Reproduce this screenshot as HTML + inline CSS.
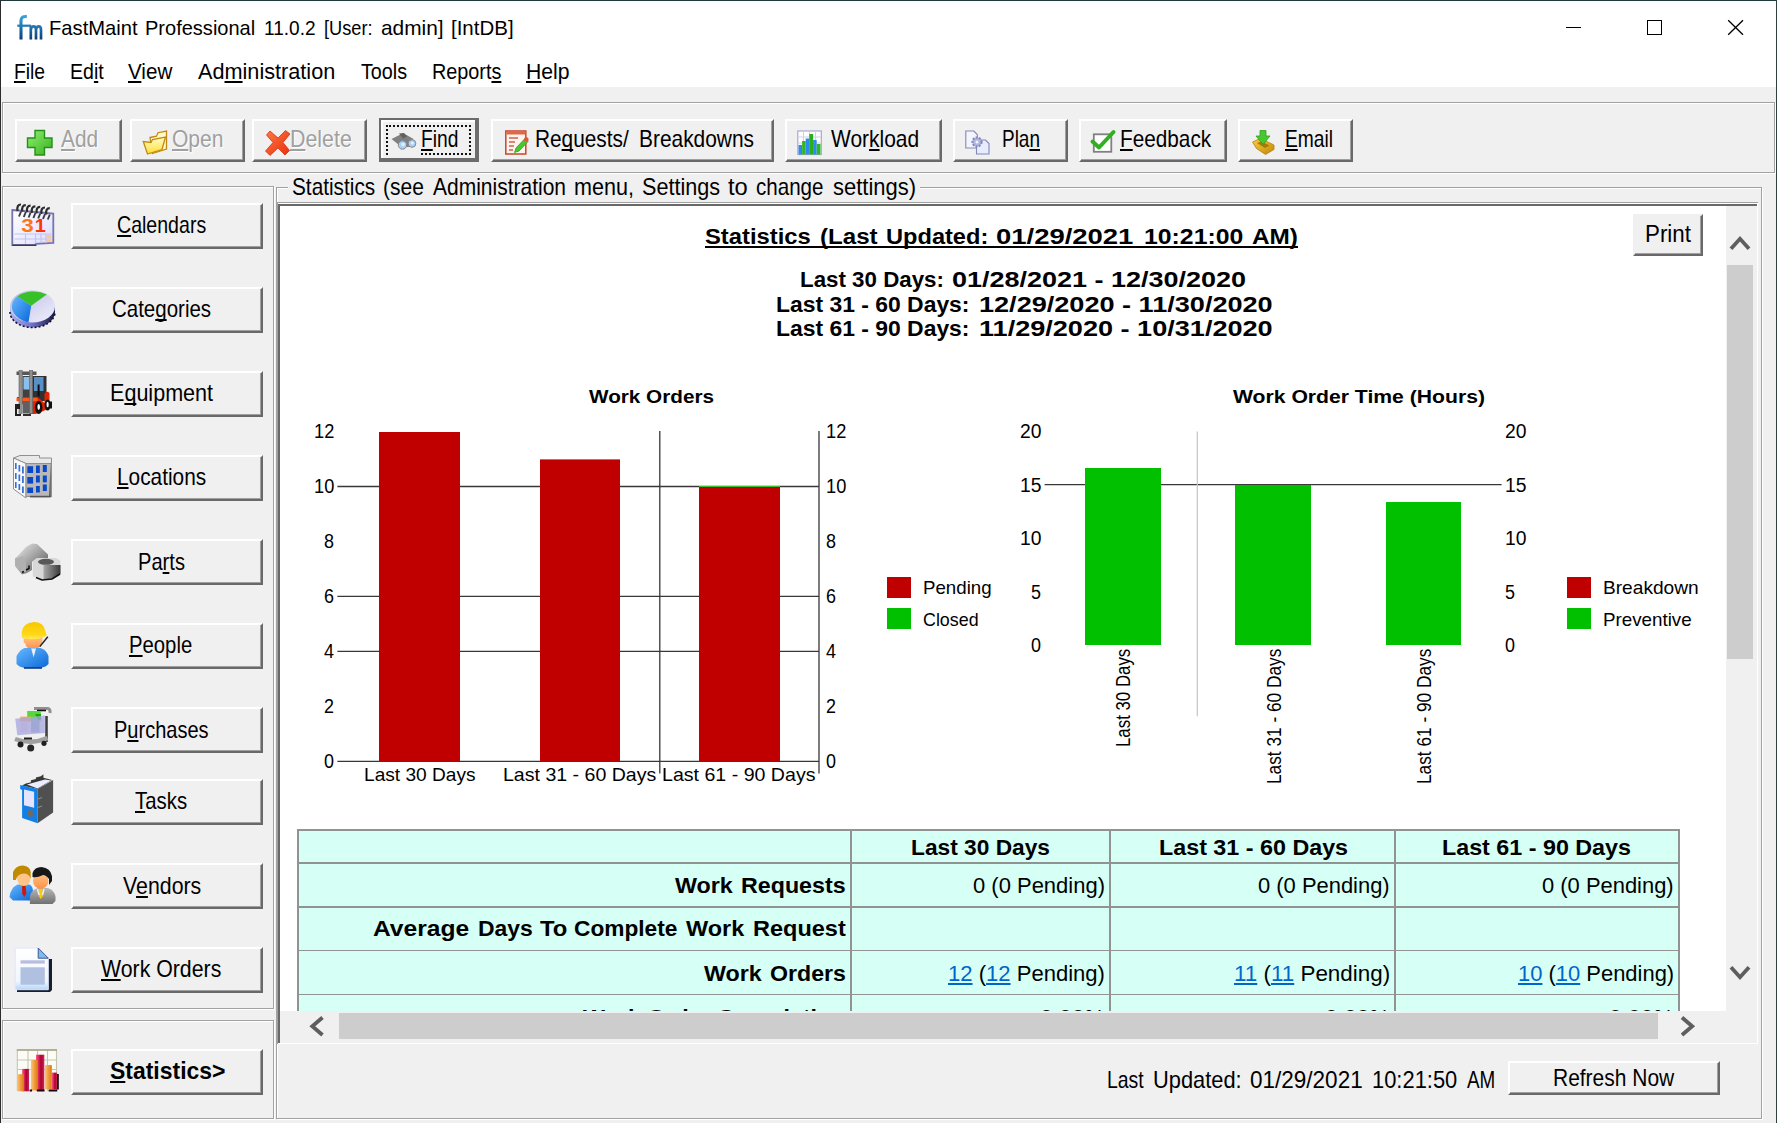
<!DOCTYPE html>
<html><head><meta charset="utf-8"><title>FastMaint</title>
<style>
*{box-sizing:border-box;margin:0;padding:0}
html,body{width:1777px;height:1123px;overflow:hidden;background:#f0f0f0;font-family:"Liberation Sans",sans-serif;color:#000}
.a{position:absolute}
.t{position:absolute;white-space:nowrap;line-height:1}
u{text-decoration:underline;text-decoration-skip-ink:none;text-underline-offset:2px;text-decoration-thickness:1.5px}
.btn{position:absolute;background:#f0f0f0;border-top:2px solid #fff;border-left:2px solid #fff;border-right:2px solid #696969;border-bottom:2px solid #696969;box-shadow:inset -1px -1px 0 #a0a0a0}
.dis{color:#a0a0a0;text-shadow:1px 1px 0 #fff}
.panel{position:absolute;border:1.3px solid #a2a2a2;box-shadow:inset 1px 1px 0 #fff, 1px 1px 0 #fff}
.b{font-weight:bold}
.gl{background:#3a3a3a}
.rd{background:#c00000}
.gr{background:#00c000}
.tl{background:#8f9493}
.lk{color:#0066cc;text-decoration:underline;text-decoration-skip-ink:none;text-underline-offset:2px}
.rot{transform-origin:0 0}

</style></head><body>
<!-- window frame -->
<div class="a" style="left:0;top:0;width:1777px;height:87px;background:#fff"></div>
<div class="a" style="left:0;top:0;width:1777px;height:1px;background:#1f3a3a"></div>
<div class="a" style="left:0;top:0;width:1px;height:1123px;background:#2b2b2b"></div>
<div class="a" style="left:1775.500px;top:0;width:1.500px;height:1123px;background:#30403f"></div>
<div class="a" style="left:1566px;top:27px;width:15px;height:1.300px;background:#000"></div>
<div class="a" style="left:1647px;top:20px;width:15px;height:15px;border:1.3px solid #000"></div>
<svg class="a" style="left:1727px;top:19px" width="18" height="18"><path d="M1.200 1.200L16 15.800M16 1.200L1.200 15.800" stroke="#000" stroke-width="1.300" fill="none"/></svg>
<!-- toolbar -->
<div class="panel" style="left:2px;top:102px;width:1773px;height:71px"></div>
<div class="btn" style="left:15px;top:118.500px;width:107px;height:43px"></div>
<div class="btn" style="left:130px;top:118.500px;width:115px;height:43px"></div>
<div class="btn" style="left:252px;top:118.500px;width:115px;height:43px"></div>
<div class="a" style="left:379px;top:118px;width:100px;height:44px;background:#f0f0f0;border:2.5px solid #6c6c6c;border-right-width:4px;border-bottom-width:4px;box-shadow:inset 2px 2px 0 #fff"><div class="a" style="left:5px;top:4.500px;width:85px;height:30px;border:2px dotted #111"></div><div class="a" style="left:8px;top:31px;width:30px;height:4px;background:#f0f0f0"></div></div>
<div class="btn" style="left:491px;top:118.500px;width:283px;height:43px"></div>
<div class="btn" style="left:785px;top:118.500px;width:157px;height:43px"></div>
<div class="btn" style="left:953px;top:118.500px;width:115px;height:43px"></div>
<div class="btn" style="left:1079px;top:118.500px;width:148px;height:43px"></div>
<div class="btn" style="left:1238px;top:118.500px;width:115px;height:43px"></div>
<!-- left panels -->
<div class="panel" style="left:2px;top:186px;width:272px;height:823px"></div>
<div class="panel" style="left:2px;top:1020px;width:272px;height:99px"></div>
<div class="btn" style="left:71.400px;top:203px;width:192px;height:45.600px"></div>
<div class="btn" style="left:71.400px;top:287px;width:192px;height:45.600px"></div>
<div class="btn" style="left:71.400px;top:371px;width:192px;height:45.600px"></div>
<div class="btn" style="left:71.400px;top:455px;width:192px;height:45.600px"></div>
<div class="btn" style="left:71.400px;top:539px;width:192px;height:45.600px"></div>
<div class="btn" style="left:71.400px;top:623px;width:192px;height:45.600px"></div>
<div class="btn" style="left:71.400px;top:707px;width:192px;height:45.600px"></div>
<div class="btn" style="left:71.400px;top:779px;width:192px;height:45.600px"></div>
<div class="btn" style="left:71.400px;top:863px;width:192px;height:45.600px"></div>
<div class="btn" style="left:71.400px;top:947px;width:192px;height:45.600px"></div>
<div class="btn" style="left:71.400px;top:1049px;width:192px;height:45.600px"></div>
<!-- group box -->
<div class="panel" style="left:276px;top:187px;width:1486px;height:932px"></div>
<div class="a" style="left:288px;top:180px;width:632px;height:16px;background:#f0f0f0"></div>
<!-- browser -->
<div class="a" style="left:277px;top:202px;width:1481px;height:842px;background:#fff;border-top:1.5px solid #a0a0a0;border-left:1px solid #a0a0a0"></div>
<div class="a" style="left:278px;top:203.5px;width:1478.5px;height:839px;background:#f0f0f0;border-top:2.5px solid #696969;border-left:2px solid #696969"></div>
<div class="a" style="left:280px;top:206px;width:1476px;height:836px;background:#fff"></div>
<div class="btn" style="left:1633px;top:214px;width:70px;height:42px;border-top-color:#f0f0f0;border-left-color:#f0f0f0"></div>
<svg class="a" style="left:0;top:0" width="1777" height="1123" viewBox="0 0 1777 1123"><g stroke="#383838" stroke-width="1.300" fill="none">
<path d="M337.400 486.500H819M337.400 596.400H819M337.400 651.300H819M337.400 761.400H819M659.800 431V773.500M819 431V773.500"/>
<path d="M1044.600 484.700H1501.600"/>
<path d="M1197.300 431.500V716.300" stroke="#c4c4c4" stroke-width="1.200"/>
</g></svg>
<div class="a rd" style="left:379px;top:431.5px;width:81px;height:329.5px"></div>
<div class="a rd" style="left:540px;top:458.5px;width:80px;height:302.5px;border-top:1.5px solid #40c020"></div>
<div class="a rd" style="left:699px;top:486px;width:81px;height:275px;border-top:1.5px solid #40c020"></div>
<div class="a rd" style="left:887.3px;top:576.7px;width:24px;height:21.1px"></div>
<div class="a gr" style="left:887.3px;top:608.2px;width:24px;height:21px"></div>
<div class="a gr" style="left:1084.5px;top:468px;width:76.5px;height:177px"></div>
<div class="a gr" style="left:1235px;top:485px;width:76px;height:160px"></div>
<div class="a gr" style="left:1385.5px;top:501.5px;width:75.5px;height:143.5px"></div>
<div class="a rd" style="left:1567.2px;top:576.7px;width:23.5px;height:21.1px"></div>
<div class="a gr" style="left:1567.2px;top:608.2px;width:23.5px;height:21px"></div>
<div class="a" style="left:297.9px;top:829.8px;width:1381.3000000000002px;height:182.20000000000005px;background:#d6fff5"></div>
<div class="a tl" style="left:296.95px;top:828.9px;width:1.9px;height:183.1px"></div>
<div class="a tl" style="left:849.75px;top:828.9px;width:1.9px;height:183.1px"></div>
<div class="a tl" style="left:1109.25px;top:828.9px;width:1.9px;height:183.1px"></div>
<div class="a tl" style="left:1394.05px;top:828.9px;width:1.9px;height:183.1px"></div>
<div class="a tl" style="left:1678.25px;top:828.9px;width:1.9px;height:183.1px"></div>
<div class="a tl" style="left:296.95px;top:828.90px;width:1383.2px;height:1.8px"></div>
<div class="a tl" style="left:296.95px;top:862.20px;width:1383.2px;height:1.8px"></div>
<div class="a tl" style="left:296.95px;top:905.90px;width:1383.2px;height:1.8px"></div>
<div class="a tl" style="left:296.95px;top:949.70px;width:1383.2px;height:1.8px"></div>
<div class="a tl" style="left:296.95px;top:993.60px;width:1383.2px;height:1.8px"></div>
<div class="btn" style="left:1508px;top:1061px;width:212px;height:34px"></div>
<div id="h1ul" class="a" style="left:704.5px;top:245.5px;width:593.5px;height:2px;background:#000"></div>
<svg class="a" style="left:0;top:0" width="1777" height="1123" viewBox="0 0 1777 1123">
<defs>
<linearGradient id="gFm" gradientUnits="userSpaceOnUse" x1="0" y1="15" x2="0" y2="40"><stop offset="0" stop-color="#3aa8e0"/><stop offset="1" stop-color="#0a3c78"/></linearGradient>
<linearGradient id="gPlus" x1="0" y1="0" x2="1" y2="1"><stop offset="0" stop-color="#90f070"/><stop offset="1" stop-color="#38b020"/></linearGradient>
<linearGradient id="gFold" x1="0" y1="0" x2="0" y2="1"><stop offset="0" stop-color="#fffbd0"/><stop offset="1" stop-color="#ffe030"/></linearGradient>
<linearGradient id="gX" x1="0" y1="0" x2="1" y2="1"><stop offset="0" stop-color="#ff7848"/><stop offset="1" stop-color="#e83008"/></linearGradient>
<linearGradient id="gCal" x1="0" y1="0" x2="1" y2="1"><stop offset="0" stop-color="#ffffff"/><stop offset="1" stop-color="#dcdcff"/></linearGradient>
<linearGradient id="gOr" x1="0" y1="0" x2="1" y2="0"><stop offset="0" stop-color="#ffc478"/><stop offset="1" stop-color="#dc7808"/></linearGradient>
<linearGradient id="gCr" x1="0" y1="0" x2="1" y2="0"><stop offset="0" stop-color="#ff5888"/><stop offset="0.6" stop-color="#b00030"/><stop offset="1" stop-color="#c82858"/></linearGradient>
<linearGradient id="gGray" x1="0" y1="0" x2="1" y2="1"><stop offset="0" stop-color="#f0f0f0"/><stop offset="1" stop-color="#505050"/></linearGradient>
<linearGradient id="gNutR" x1="0" y1="0" x2="1" y2="0"><stop offset="0" stop-color="#a8a8a8"/><stop offset="1" stop-color="#383838"/></linearGradient>
<linearGradient id="gBlue" x1="0" y1="0" x2="1" y2="1"><stop offset="0" stop-color="#68b8ff"/><stop offset="1" stop-color="#0868d8"/></linearGradient>
<linearGradient id="gDoc" x1="0" y1="0" x2="0" y2="1"><stop offset="0" stop-color="#ffffff"/><stop offset="0.8" stop-color="#f0f6ff"/><stop offset="1" stop-color="#b8d4f8"/></linearGradient>
<linearGradient id="gPieR" x1="0" y1="0" x2="1" y2="1"><stop offset="0" stop-color="#b8b8e0"/><stop offset="1" stop-color="#f0f0ff"/></linearGradient>
<linearGradient id="gPieS" x1="0" y1="0" x2="1" y2="0"><stop offset="0" stop-color="#b0b0f0"/><stop offset="0.45" stop-color="#7878d0"/><stop offset="1" stop-color="#181840"/></linearGradient>
<linearGradient id="gHelm" x1="0" y1="0" x2="0" y2="1"><stop offset="0" stop-color="#f8c800"/><stop offset="0.7" stop-color="#ffd818"/><stop offset="1" stop-color="#ffee60"/></linearGradient>
<linearGradient id="gFace" x1="0" y1="0" x2="0" y2="1"><stop offset="0" stop-color="#ffc888"/><stop offset="1" stop-color="#ff9048"/></linearGradient>
<linearGradient id="gSuit" x1="0" y1="0" x2="0" y2="1"><stop offset="0" stop-color="#b8b8b8"/><stop offset="1" stop-color="#707070"/></linearGradient>
<linearGradient id="gGold" x1="0" y1="0" x2="1" y2="1"><stop offset="0" stop-color="#f8d040"/><stop offset="1" stop-color="#c08808"/></linearGradient>
</defs>

<!-- fm logo -->
<g fill="none" stroke="url(#gFm)">
<path d="M21 39.600V20.800q0-4.800 5.800-4.200" stroke-width="3.100"/>
<path d="M17.300 25.700H31" stroke-width="2.200"/>
<path d="M30.800 39.600V25.500M30.800 30q0.300-3.600 2.800-3.600q2.400 0 2.400 3.600V39.600M36 30q0.300-3.600 2.700-3.600q2.300 0 2.300 3.600V39.600" stroke-width="2.700"/>
</g>

<!-- toolbar: plus -->
<path d="M35 130.5h9.5v7.5h7.5v9.5h-7.5v7.5h-9.5v-7.5h-7.5v-9.5h7.5z" fill="url(#gPlus)" stroke="#249018" stroke-width="1.4"/>
<!-- folder -->
<g stroke="#c08a10" stroke-width="1.3">
<path d="M150 137.5l6.5-1.3l1.5-3.5l8.5-1.7v18l-14 4.5z" fill="#fff8c8"/>
<path d="M143.3 141.5l4.2 12.5l14.5-4.5l3.5-12.5l-13 2.5l-1.5 3z" fill="url(#gFold)"/>
</g>
<!-- red X -->
<path d="M270 131l8 7l7.5-7.5l4.5 3.5l-7 8.5l6.5 8l-4.5 4.5l-7-7l-8 7.5l-4.5-4.5l7.5-8.5l-6.5-7.5z" fill="url(#gX)" stroke="#d83010" stroke-width="0.8" stroke-linejoin="round"/>
<!-- binoculars -->
<g>
<path d="M391.5 139l8-4l4-1.5l4 2l6 3.5l-4 8h-8z" fill="#808080"/>
<path d="M399 133.5l5-0.5l3 3.5l-4 2z" fill="#606060"/>
<circle cx="402.5" cy="145" r="4.2" fill="#a8d0f8" stroke="#888" stroke-width="1"/>
<circle cx="412" cy="143.5" r="3.8" fill="#a8d0f8" stroke="#888" stroke-width="1"/>
<circle cx="403" cy="144.5" r="1.8" fill="#e0f0ff"/><circle cx="412.3" cy="143" r="1.6" fill="#e0f0ff"/>
</g>
<!-- requests notepad -->
<g>
<rect x="505.8" y="131" width="20" height="23" fill="#fff4ec" stroke="#c85038" stroke-width="1.6"/>
<rect x="506.5" y="131.5" width="19" height="3" fill="#e06848"/>
<path d="M509 138h9M509 142h6M509 146h5M509 150h4" stroke="#d06050" stroke-width="1.3"/>
<path d="M514.5 152.5l1.5-4.5l9-9.5l3 3l-9 9.5z" fill="#48c830" stroke="#30a020" stroke-width="0.8"/>
<circle cx="526.3" cy="139.5" r="2.3" fill="#f05030"/>
</g>
<!-- workload -->
<g>
<rect x="797.8" y="131" width="23.5" height="23.5" fill="#fff" stroke="#a8a8d0" stroke-width="1.2"/>
<path d="M803.5 131v23M809.5 131v23M815.5 131v23M798 137h23M798 143h23" stroke="#d0d0e8" stroke-width="1"/>
<rect x="798.5" y="145" width="3.6" height="9.5" fill="#3088f0"/>
<rect x="802.1" y="141" width="3.6" height="13.5" fill="#30b820"/>
<rect x="805.7" y="138.5" width="3.6" height="16" fill="#3088f0"/>
<rect x="809.3" y="134" width="3.8" height="20.5" fill="#28b018"/>
<rect x="813.1" y="140" width="3.6" height="14.5" fill="#3088f0"/>
<rect x="816.7" y="144" width="3.8" height="10.5" fill="#30b820"/>
</g>
<!-- plan -->
<g stroke="#8088b8" stroke-width="1.1">
<path d="M965.8 131h8l3.5 3.5v13.5h-11.5z" fill="#f4f4ff"/>
<path d="M976.5 140h9l3.5 3.5v10.5h-12.5z" fill="#e8ecff"/>
<circle cx="977" cy="142" r="4.6" fill="#b0b4dc" stroke-dasharray="2 1.3" stroke-width="2"/>
<circle cx="977" cy="142" r="1.6" fill="#f0f0ff" stroke="none"/>
</g>
<!-- feedback check -->
<g>
<rect x="1093.8" y="134.3" width="17.5" height="17.5" fill="#fff" stroke="#808080" stroke-width="1.8"/>
<path d="M1092.5 141.5l6.5 6l14.5-15.5" fill="none" stroke="#30b020" stroke-width="4" stroke-linecap="round" stroke-linejoin="round"/>
</g>
<!-- email -->
<g>
<path d="M1252.5 142l8-3.5l13.5 6.5v4.5l-8.5 5l-9-6z" fill="url(#gGold)" stroke="#b88010" stroke-width="0.8"/>
<path d="M1257 143l4.5-1.5l8 4l-4.5 2.5z" fill="#a87808"/>
<path d="M1260 130.5h6v5.5h4l-7 8.5l-7-8.5h4z" fill="#48c830" stroke="#30a020" stroke-width="0.8"/>
</g>

<!-- sidebar: calendar -->
<g>
<path d="M12.3 210l41 3.6V243l-17.5 0.8v1.3H12.3z" fill="url(#gCal)" stroke="#7474b4" stroke-width="1.8"/>
<path d="M14.5 234h37M14.5 239h37M25.5 234v10M35.5 234v9.5M41 234v9M46 234v9" stroke="#c4c4f0" stroke-width="1.2"/>
<path d="M12.300 245.200H36" stroke="#34344c" stroke-width="1.400"/>
<rect x="46.5" y="235" width="4.8" height="3.3" fill="#ffc890"/><rect x="46.5" y="240" width="4.8" height="2" fill="#ffc890"/>
<path d="M17.500 211q-1-6.500 3.500-6.500M22.300 211.600q-1-6.500 3.500-6.500M27.100 212.200q-1-6.500 3.500-6.500M31.900 212.800q-1-6.500 3.500-6.500M36.700 213.400q-1-6.500 3.500-6.500M41.500 214q-1-6.500 3.500-6.500M46.300 214.600q-1-6.500 3.500-6.500" fill="none" stroke="#2c2c2c" stroke-width="2.200"/>
<path d="M19 216.500l2-5M23.800 217l2-5M28.600 217.500l2-5M33.400 218l2-5M38.200 218.500l2-5M43 219l2-5M47.800 219.500l2-5" stroke="#3a3a3a" stroke-width="1.900"/>
<text x="21.300" y="232" font-family="Liberation Sans" font-weight="bold" font-size="19" fill="#ff7414" textLength="12.500" lengthAdjust="spacingAndGlyphs">3</text>
<text x="34.800" y="232" font-family="Liberation Sans" font-weight="bold" font-size="19" fill="#ff3400" textLength="11" lengthAdjust="spacingAndGlyphs">1</text>
</g>
<!-- pie -->
<g>
<path d="M10 307v5a22.5 15.5 0 0 0 45 0v-5z" fill="url(#gPieS)"/>
<path d="M10 312a22.5 15.5 0 0 0 45 0" fill="none" stroke="#101030" stroke-width="1.6" stroke-dasharray="2 2"/>
<ellipse cx="32.5" cy="306.5" rx="22.5" ry="16" fill="url(#gPieR)"/>
<path d="M31.2 305.7L17.5 296.2A22.5 16 0 0 0 28.5 322.2z" fill="url(#gBlue)"/>
<path d="M31.2 305.7L17.5 296.2A22.5 16 0 0 1 46.8 294.5z" fill="#38c028"/>
</g>
<!-- forklift -->
<g>
<rect x="32" y="376" width="14.5" height="25" fill="#303030"/>
<rect x="22.5" y="376" width="10" height="26" fill="#404040"/>
<rect x="23.5" y="377" width="7.5" height="12.5" fill="#88c0f0"/>
<rect x="34" y="377" width="9.5" height="14" fill="#5890c8"/>
<rect x="37.6" y="384.5" width="2" height="12" fill="#101010"/>
<path d="M16.5 397h21l7 6v-9q2-4 5-1v15l-6 3l-8 3h-5z" fill="#e02400"/>
<rect x="16.5" y="398" width="21" height="3.2" fill="#ff5818"/>
<rect x="23" y="401.5" width="8.5" height="12" fill="#606060"/>
<rect x="16.5" y="371.5" width="20" height="3.5" fill="#585858"/>
<rect x="19" y="370.5" width="3.2" height="43" fill="#909090" stroke="#606060" stroke-width="0.6"/>
<rect x="29.5" y="370.5" width="3.2" height="43" fill="#909090" stroke="#606060" stroke-width="0.6"/>
<path d="M15 404h5v5h-3v5h4v2h-6z" fill="#202020"/>
<path d="M23 414h8v2h-8z" fill="#303030"/>
<ellipse cx="38.7" cy="407.5" rx="3.8" ry="6.5" fill="#101010"/><ellipse cx="38.7" cy="407" rx="1.3" ry="3" fill="#fff"/>
<ellipse cx="47.6" cy="405" rx="3" ry="5.6" fill="#101010"/><ellipse cx="47.6" cy="404.5" rx="1.1" ry="2.7" fill="#fff"/>
<rect x="49.5" y="401.5" width="2.5" height="7" fill="#101010"/>
</g>
<!-- building -->
<g>
<path d="M13.5 458l6.5-2.5h19.5v2.5h12v5.5H26z" fill="#e8e8e8" stroke="#909090" stroke-width="1"/>
<path d="M13.5 458L26 463.5V498L13.5 489z" fill="#f8f8f8" stroke="#909090" stroke-width="1"/>
<rect x="26" y="463.5" width="25.5" height="33" fill="#b8b8b8" stroke="#909090" stroke-width="1"/>
<path d="M50.8 461v36.5H30v-1.8h19z" fill="#404040" opacity="0.75"/>
<g fill="#0848c8">
<rect x="27.3" y="466.2" width="5.8" height="6.8"/><rect x="36" y="465.5" width="3.8" height="7.5"/><rect x="42.8" y="465" width="4" height="7"/>
<rect x="27.3" y="477" width="5.8" height="6.6"/><rect x="36" y="475.5" width="3.8" height="7"/><rect x="42.8" y="475.5" width="4" height="6.8"/>
<rect x="27.3" y="487.5" width="5.8" height="5.5"/><rect x="36" y="486" width="3.8" height="6.5"/><rect x="42.8" y="484.5" width="4" height="6.5"/>
</g>
<g fill="#3870d8">
<rect x="15" y="463" width="1.6" height="6"/><rect x="18.5" y="465" width="1.7" height="6.5"/><rect x="22" y="466.5" width="1.8" height="7"/>
<rect x="15" y="473" width="1.6" height="6"/><rect x="18.5" y="474.5" width="1.7" height="6.5"/><rect x="22" y="476" width="1.8" height="7"/>
<rect x="15" y="482" width="1.6" height="6"/><rect x="18.5" y="484" width="1.7" height="6"/><rect x="22" y="486.5" width="1.8" height="6.5"/>
</g>
</g>
<!-- nut & bolt -->
<g>
<path d="M15 558.5l5-5l6-6.5l6-3.5l5 0.5l11 10.5v4.5l-16 2.5v8.5l-5 3l-5 1.5l-7-8.5z" fill="url(#gGray)"/>
<path d="M15 558.5l8-2.5l3 6.5v9l-4 1.5l-7-8z" fill="#b0b0b0"/>
<path d="M32.8 561l4-3h19l4.5 2.5V574l-8 5l-10 1l-9.5-3.5z" fill="#d8d8d8"/>
<path d="M43.5 565h17v9l-8 5l-9 1z" fill="url(#gNutR)"/>
<path d="M36 577.5l6 2.5l10-1l8-5" fill="none" stroke="#101010" stroke-width="1.6"/>
<ellipse cx="46" cy="561.8" rx="8" ry="3" fill="#585858"/>
<path d="M26 570l3-1.5v-3M22 572.5l2-1" stroke="#101010" stroke-width="1.5" fill="none"/>
</g>
<!-- worker -->
<g>
<path d="M23.7 636h18.7v6q-2 6-6.5 7h-6q-4-1-4.7-6h-1.5z" fill="url(#gFace)"/>
<path d="M47.8 636.8l-8 9.8" stroke="#202020" stroke-width="1.5"/>
<path d="M21.8 640v-8q1-9 12-10q10 0 11.5 9l1.5 4.5q-10 6-25 2.5z" fill="url(#gHelm)"/>
<path d="M16.5 664v-8q4-7 8-8h16q6 2 8 8v8l-3 2.5l-5 1.5h-16l-5-1.5z" fill="url(#gBlue)"/>
<path d="M31.2 648.5h4.8l-2.4 8.7z" fill="#f0f0ff"/>
<path d="M24 668h18" stroke="#083080" stroke-width="1.5"/>
</g>
<!-- cart -->
<g>
<path d="M34 708.5h14q2.5 0.5 2 4.500" fill="none" stroke="#909090" stroke-width="3"/>
<path d="M37 710.5h9" stroke="#101010" stroke-width="1.6"/>
<rect x="27.2" y="711" width="13.6" height="10" fill="#58d838"/>
<path d="M35 714h6v6h-3z" fill="#18a808"/>
<rect x="20.2" y="716.6" width="10.5" height="5" fill="#ffa848"/>
<rect x="20.5" y="721" width="7" height="11" fill="#f4d4d0"/>
<rect x="31" y="720" width="8.5" height="12.5" fill="#8ca8a8"/>
<path d="M15.2 718.7l29.6-3.2V733l-27.500 2.300z" fill="#a8a8e0" opacity="0.78"/>
<path d="M46.5 716v26" stroke="#404040" stroke-width="2.6"/>
<path d="M15 739q16 6 32.500-1" fill="none" stroke="#a0a0a0" stroke-width="4.5"/>
<path d="M24 738.500h8" stroke="#202020" stroke-width="2"/>
<circle cx="20.5" cy="744.5" r="3" fill="#202020"/><circle cx="30.700" cy="748" r="3.5" fill="#282828"/><circle cx="44" cy="743.3" r="2.6" fill="#202020"/>
</g>
<!-- binder -->
<g>
<path d="M25.9 783.5l5-1.300v-2l5-1.200v-1.500l5-1.200l2.500-2v3.500l8.600 2.200L37.600 789.100L22 785.500z" fill="#383838"/>
<path d="M27 784.500L45 779.500l6 1L37.600 788.600z" fill="#ececff"/>
<path d="M20.200 785.100L37.600 789.100V823.300L22.100 818V790l-1.900-1z" fill="#1080e8"/>
<path d="M37.600 789.100L53.100 780V812.600L37.600 823.300z" fill="#505050"/>
<path d="M24 789.600l10.100 2.200v16l-10.100-2.600z" fill="#e4e4ff"/>
<rect x="27.500" y="810.500" width="5.300" height="6" fill="#786858"/>
<path d="M38 799l4-1.500M38 807.500l4-1.500" stroke="#909090" stroke-width="1"/>
</g>
<!-- two people -->
<g>
<path d="M9.500 897q1-9 8-12.400h12q3 1.500 3.500 6v9.800h-20z" fill="url(#gBlue)"/>
<path d="M22.100 885.500h3.500l0.800 8l-2.100 3.500l-2.200-3.500z" fill="#d01808"/>
<ellipse cx="23.800" cy="878.500" rx="6.800" ry="7.500" fill="#ffc488"/>
<path d="M13 880v-8q3-7 10-6.600q7 0.600 7.700 6.600v6.500q-2-5-7-5q-6 0-8 6.500z" fill="#c08a00"/>
<path d="M29.900 904v-8q1.500-6 8-8h10q6 2 7.600 8v5l-3 3z" fill="url(#gSuit)"/>
<path d="M39.200 889h3.200l0.600 7l-2.200 3l-2-3z" fill="#f8cc00"/>
<path d="M37.500 889l1.500 6M44 889l-1.500 6" stroke="#f0f0f8" stroke-width="1.4"/>
<ellipse cx="40.700" cy="880.500" rx="7.700" ry="8.500" fill="url(#gFace)"/>
<path d="M32.500 877v-4q2-6 9-6q9 1 10.500 9v5l-3 4v-6q-3-4-6-4q-6 3-10.500 2z" fill="#181818"/>
</g>
<!-- document -->
<g>
<path d="M17 959h35v31l-2 2H17z" fill="#182030"/>
<path d="M15.200 948H38.200L48.300 958.200V989.700H15.200z" fill="url(#gDoc)" stroke="#dce8fc" stroke-width="1"/>
<path d="M38.200 948v10.200H48.300z" fill="#78bcf0" stroke="#405890" stroke-width="1"/>
<rect x="20.500" y="960.300" width="24.300" height="3.300" fill="#b8bede"/>
<rect x="20.500" y="967.300" width="24.300" height="17.400" fill="#b0c0e0"/>
</g>
<!-- stats chart -->
<g>
<rect x="16.800" y="1049.600" width="40.100" height="41.500" fill="#fcfcf6"/>
<path d="M16.800 1050H57M16.800 1060H57M16.800 1069.500H57M17.300 1049.600V1091M28 1049.600V1091M37.500 1049.600V1091M47.500 1049.600V1091M56.500 1049.600V1091" stroke="#c4c4b4" stroke-width="1.1"/>
<path d="M16.800 1050H57" stroke="#a8a080" stroke-width="1.4"/>
<rect x="22.100" y="1068.900" width="7" height="22.400" fill="url(#gCr)"/>
<rect x="17" y="1074.200" width="7" height="17.100" fill="url(#gOr)"/>
<rect x="36" y="1054.700" width="8.300" height="36.300" fill="url(#gCr)"/>
<rect x="30.900" y="1060" width="7" height="30.500" fill="url(#gOr)"/>
<rect x="51.800" y="1072.600" width="5.300" height="16.800" fill="url(#gCr)"/>
<rect x="44.800" y="1065.100" width="7" height="24.200" fill="url(#gOr)"/>
<rect x="57" y="1074" width="1.800" height="15.500" fill="#180808"/>
<path d="M29.600 1090.500h2.500M37 1090.500h7.500M48.600 1090.500h8.600" stroke="#100808" stroke-width="2"/>
</g>
</svg>

<div id="ti0" class="t " style="left:48.6px;top:18.0px;font-size:20.8px;transform-origin:0 0;transform:rotate(0.02deg) scaleX(0.9702);">FastMaint</div>
<div id="ti1" class="t " style="left:145.2px;top:18.0px;font-size:20.8px;transform-origin:0 0;transform:rotate(0.02deg) scaleX(0.9628);">Professional</div>
<div id="ti2" class="t " style="left:263.9px;top:18.0px;font-size:20.8px;transform-origin:0 0;transform:rotate(0.02deg) scaleX(0.9167);">11.0.2</div>
<div id="ti3" class="t " style="left:323.5px;top:18.0px;font-size:20.8px;transform-origin:0 0;transform:rotate(0.02deg) scaleX(0.8742);">[User:</div>
<div id="ti4" class="t " style="left:380.6px;top:18.0px;font-size:20.8px;transform-origin:0 0;transform:rotate(0.02deg) scaleX(1.0027);">admin]</div>
<div id="ti5" class="t " style="left:450.7px;top:18.0px;font-size:20.8px;transform-origin:0 0;transform:rotate(0.02deg) scaleX(0.9845);">[IntDB]</div>
<div id="m1" class="t " style="left:13.8px;top:62.0px;font-size:21.3px;transform-origin:0 0;transform:rotate(0.02deg) scaleX(0.9057);"><u>F</u>ile</div>
<div id="m2" class="t " style="left:70.3px;top:62.0px;font-size:21.3px;transform-origin:0 0;transform:rotate(0.02deg) scaleX(0.9176);">Ed<u>i</u>t</div>
<div id="m3" class="t " style="left:128.4px;top:62.0px;font-size:21.3px;transform-origin:0 0;transform:rotate(0.02deg) scaleX(0.9671);"><u>V</u>iew</div>
<div id="m4" class="t " style="left:197.5px;top:62.0px;font-size:21.3px;transform-origin:0 0;transform:rotate(0.02deg) scaleX(1.0172);">Ad<u>m</u>inistration</div>
<div id="m5" class="t " style="left:360.5px;top:62.0px;font-size:21.3px;transform-origin:0 0;transform:rotate(0.02deg) scaleX(0.9271);">Tools</div>
<div id="m6" class="t " style="left:431.6px;top:62.0px;font-size:21.3px;transform-origin:0 0;transform:rotate(0.02deg) scaleX(0.9305);">Report<u>s</u></div>
<div id="m7" class="t " style="left:525.8px;top:62.0px;font-size:21.3px;transform-origin:0 0;transform:rotate(0.02deg) scaleX(0.9950);"><u>H</u>elp</div>
<div id="b1" class="t dis" style="left:60.5px;top:128.0px;font-size:23.4px;transform-origin:0 0;transform:rotate(0.02deg) scaleX(0.8908);"><u>A</u>dd</div>
<div id="b2" class="t dis" style="left:172.2px;top:128.0px;font-size:23.4px;transform-origin:0 0;transform:rotate(0.02deg) scaleX(0.8997);"><u>O</u>pen</div>
<div id="b3" class="t dis" style="left:289.8px;top:128.0px;font-size:23.4px;transform-origin:0 0;transform:rotate(0.02deg) scaleX(0.9150);"><u>D</u>elete</div>
<div id="b4" class="t " style="left:421.2px;top:128.0px;font-size:23.4px;transform-origin:0 0;transform:rotate(0.02deg) scaleX(0.8215);"><u>F</u>ind</div>
<div id="b5a" class="t " style="left:534.7px;top:128.0px;font-size:23.4px;transform-origin:0 0;transform:rotate(0.02deg) scaleX(0.8895);">Re<u>q</u>uests/</div>
<div id="b5b" class="t " style="left:638.6px;top:128.0px;font-size:23.4px;transform-origin:0 0;transform:rotate(0.02deg) scaleX(0.8934);">Breakdowns</div>
<div id="b6" class="t " style="left:831.0px;top:128.0px;font-size:23.4px;transform-origin:0 0;transform:rotate(0.02deg) scaleX(0.8963);">Wor<u>k</u>load</div>
<div id="b7" class="t " style="left:1001.8px;top:128.0px;font-size:23.4px;transform-origin:0 0;transform:rotate(0.02deg) scaleX(0.8113);">Pla<u>n</u></div>
<div id="b8" class="t " style="left:1119.8px;top:128.0px;font-size:23.4px;transform-origin:0 0;transform:rotate(0.02deg) scaleX(0.8876);"><u>F</u>eedback</div>
<div id="b9" class="t " style="left:1284.5px;top:128.0px;font-size:23.4px;transform-origin:0 0;transform:rotate(0.02deg) scaleX(0.8221);"><u>E</u>mail</div>
<div id="s1" class="t " style="left:117.0px;top:214.0px;font-size:23.4px;transform-origin:0 0;transform:rotate(0.02deg) scaleX(0.8364);"><u>C</u>alendars</div>
<div id="s2" class="t " style="left:111.9px;top:298.0px;font-size:23.4px;transform-origin:0 0;transform:rotate(0.02deg) scaleX(0.8758);">Cate<u>g</u>ories</div>
<div id="s3" class="t " style="left:109.9px;top:382.0px;font-size:23.4px;transform-origin:0 0;transform:rotate(0.02deg) scaleX(0.9217);">E<u>q</u>uipment</div>
<div id="s4" class="t " style="left:117.0px;top:466.0px;font-size:23.4px;transform-origin:0 0;transform:rotate(0.02deg) scaleX(0.8907);"><u>L</u>ocations</div>
<div id="s5" class="t " style="left:137.8px;top:551.0px;font-size:23.4px;transform-origin:0 0;transform:rotate(0.02deg) scaleX(0.8603);">Pa<u>r</u>ts</div>
<div id="s6" class="t " style="left:129.3px;top:634.0px;font-size:23.4px;transform-origin:0 0;transform:rotate(0.02deg) scaleX(0.8675);"><u>P</u>eople</div>
<div id="s7" class="t " style="left:113.6px;top:719.0px;font-size:23.4px;transform-origin:0 0;transform:rotate(0.02deg) scaleX(0.8558);">P<u>u</u>rchases</div>
<div id="s8" class="t " style="left:134.7px;top:790.0px;font-size:23.4px;transform-origin:0 0;transform:rotate(0.02deg) scaleX(0.8709);"><u>T</u>asks</div>
<div id="s9" class="t " style="left:122.7px;top:875.0px;font-size:23.4px;transform-origin:0 0;transform:rotate(0.02deg) scaleX(0.9120);">V<u>e</u>ndors</div>
<div id="s10" class="t " style="left:101.3px;top:958.0px;font-size:23.4px;transform-origin:0 0;transform:rotate(0.02deg) scaleX(0.9103);"><u>W</u>ork Orders</div>
<div id="s11" class="t b" style="left:109.8px;top:1060.0px;font-size:23.4px;transform-origin:0 0;transform:rotate(0.02deg) scaleX(0.9815);"><u>S</u>tatistics&gt;</div>
<div id="gb0" class="t " style="left:292.3px;top:176.0px;font-size:23.4px;transform-origin:0 0;transform:rotate(0.02deg) scaleX(0.8889);">Statistics</div>
<div id="gb1" class="t " style="left:383.1px;top:176.0px;font-size:23.4px;transform-origin:0 0;transform:rotate(0.02deg) scaleX(0.8984);">(see</div>
<div id="gb2" class="t " style="left:432.5px;top:176.0px;font-size:23.4px;transform-origin:0 0;transform:rotate(0.02deg) scaleX(0.8974);">Administration</div>
<div id="gb3" class="t " style="left:574.0px;top:176.0px;font-size:23.4px;transform-origin:0 0;transform:rotate(0.02deg) scaleX(0.9212);">menu,</div>
<div id="gb4" class="t " style="left:642.3px;top:176.0px;font-size:23.4px;transform-origin:0 0;transform:rotate(0.02deg) scaleX(0.9238);">Settings</div>
<div id="gb5" class="t " style="left:728.0px;top:176.0px;font-size:23.4px;transform-origin:0 0;transform:rotate(0.02deg) scaleX(1.0141);">to</div>
<div id="gb6" class="t " style="left:756.3px;top:176.0px;font-size:23.4px;transform-origin:0 0;transform:rotate(0.02deg) scaleX(0.8794);">change</div>
<div id="gb7" class="t " style="left:832.7px;top:176.0px;font-size:23.4px;transform-origin:0 0;transform:rotate(0.02deg) scaleX(0.9399);">settings)</div>
<div id="h1a" class="t b" style="left:704.7px;top:226.0px;font-size:22px;transform-origin:0 0;transform:rotate(0.02deg) scaleX(1.0804);">Statistics</div>
<div id="h1b" class="t b" style="left:819.8px;top:226.0px;font-size:22px;transform-origin:0 0;transform:rotate(0.02deg) scaleX(1.0957);">(Last</div>
<div id="h1c" class="t b" style="left:886.0px;top:226.0px;font-size:22px;transform-origin:0 0;transform:rotate(0.02deg) scaleX(1.0730);">Updated:</div>
<div id="h1d" class="t b" style="left:996.4px;top:226.0px;font-size:22px;transform-origin:0 0;transform:rotate(0.02deg) scaleX(1.2478);">01/29/2021</div>
<div id="h1e" class="t b" style="left:1143.6px;top:226.0px;font-size:22px;transform-origin:0 0;transform:rotate(0.02deg) scaleX(1.1284);">10:21:00</div>
<div id="h1f" class="t b" style="left:1251.8px;top:226.0px;font-size:22px;transform-origin:0 0;transform:rotate(0.02deg) scaleX(1.1069);">AM)</div>
<div id="h2a" class="t b" style="left:800.0px;top:269.0px;font-size:22px;transform-origin:0 0;transform:rotate(0.02deg) scaleX(1.0150);">Last 30 Days:</div>
<div id="h2b" class="t b" style="left:952.4px;top:269.0px;font-size:22px;transform-origin:0 0;transform:rotate(0.02deg) scaleX(1.2266);">01/28/2021 - 12/30/2020</div>
<div id="h3a" class="t b" style="left:775.5px;top:294.0px;font-size:22px;transform-origin:0 0;transform:rotate(0.02deg) scaleX(1.0410);">Last 31 - 60 Days:</div>
<div id="h3b" class="t b" style="left:979.0px;top:294.0px;font-size:22px;transform-origin:0 0;transform:rotate(0.02deg) scaleX(1.2311);">12/29/2020 - 11/30/2020</div>
<div id="h4a" class="t b" style="left:775.5px;top:318.0px;font-size:22px;transform-origin:0 0;transform:rotate(0.02deg) scaleX(1.0410);">Last 61 - 90 Days:</div>
<div id="h4b" class="t b" style="left:979.0px;top:318.0px;font-size:22px;transform-origin:0 0;transform:rotate(0.02deg) scaleX(1.2311);">11/29/2020 - 10/31/2020</div>
<div id="print" class="t " style="left:1645.4px;top:222.0px;font-size:24.6px;transform-origin:0 0;transform:rotate(0.02deg) scaleX(0.9093);">Print</div>
<div id="c1t" class="t b" style="left:589.0px;top:388.0px;font-size:18.3px;transform-origin:0 0;transform:rotate(0.02deg) scaleX(1.1321);">Work Orders</div>
<div id="yl0" class="t " style="left:313.7px;top:422.0px;font-size:19.5px;transform-origin:0 0;transform:rotate(0.02deg) scaleX(0.9350);">12</div>
<div id="yr0" class="t " style="left:825.6px;top:422.0px;font-size:19.5px;transform-origin:0 0;transform:rotate(0.02deg) scaleX(0.9350);">12</div>
<div id="yl1" class="t " style="left:313.7px;top:477.0px;font-size:19.5px;transform-origin:0 0;transform:rotate(0.02deg) scaleX(0.9350);">10</div>
<div id="yr1" class="t " style="left:825.6px;top:477.0px;font-size:19.5px;transform-origin:0 0;transform:rotate(0.02deg) scaleX(0.9350);">10</div>
<div id="yl2" class="t " style="left:324.0px;top:532.0px;font-size:19.5px;transform-origin:0 0;transform:rotate(0.02deg) scaleX(0.9202);">8</div>
<div id="yr2" class="t " style="left:825.6px;top:532.0px;font-size:19.5px;transform-origin:0 0;transform:rotate(0.02deg) scaleX(0.9202);">8</div>
<div id="yl3" class="t " style="left:324.0px;top:587.0px;font-size:19.5px;transform-origin:0 0;transform:rotate(0.02deg) scaleX(0.9202);">6</div>
<div id="yr3" class="t " style="left:825.6px;top:587.0px;font-size:19.5px;transform-origin:0 0;transform:rotate(0.02deg) scaleX(0.9202);">6</div>
<div id="yl4" class="t " style="left:324.0px;top:642.0px;font-size:19.5px;transform-origin:0 0;transform:rotate(0.02deg) scaleX(0.9202);">4</div>
<div id="yr4" class="t " style="left:825.6px;top:642.0px;font-size:19.5px;transform-origin:0 0;transform:rotate(0.02deg) scaleX(0.9202);">4</div>
<div id="yl5" class="t " style="left:324.0px;top:697.0px;font-size:19.5px;transform-origin:0 0;transform:rotate(0.02deg) scaleX(0.9202);">2</div>
<div id="yr5" class="t " style="left:825.6px;top:697.0px;font-size:19.5px;transform-origin:0 0;transform:rotate(0.02deg) scaleX(0.9202);">2</div>
<div id="yl6" class="t " style="left:324.0px;top:752.0px;font-size:19.5px;transform-origin:0 0;transform:rotate(0.02deg) scaleX(0.9202);">0</div>
<div id="yr6" class="t " style="left:825.6px;top:752.0px;font-size:19.5px;transform-origin:0 0;transform:rotate(0.02deg) scaleX(0.9202);">0</div>
<div id="x1" class="t " style="left:364.0px;top:766.0px;font-size:18.5px;transform-origin:0 0;transform:rotate(0.02deg) scaleX(1.0334);">Last 30 Days</div>
<div id="x2" class="t " style="left:502.7px;top:766.0px;font-size:18.5px;transform-origin:0 0;transform:rotate(0.02deg) scaleX(1.0572);">Last 31 - 60 Days</div>
<div id="x3" class="t " style="left:662.0px;top:766.0px;font-size:18.5px;transform-origin:0 0;transform:rotate(0.02deg) scaleX(1.0586);">Last 61 - 90 Days</div>
<div id="l1" class="t " style="left:923.0px;top:579.0px;font-size:18.5px;transform-origin:0 0;transform:rotate(0.02deg) scaleX(1.0101);">Pending</div>
<div id="l2" class="t " style="left:922.8px;top:611.0px;font-size:18.5px;transform-origin:0 0;transform:rotate(0.02deg) scaleX(0.9653);">Closed</div>
<div id="c2t" class="t b" style="left:1233.0px;top:388.0px;font-size:18.3px;transform-origin:0 0;transform:rotate(0.02deg) scaleX(1.1573);">Work Order Time (Hours)</div>
<div id="zl0" class="t " style="left:1019.8px;top:422.0px;font-size:19.5px;transform-origin:0 0;transform:rotate(0.02deg) scaleX(0.9903);">20</div>
<div id="zr0" class="t " style="left:1505.3px;top:422.0px;font-size:19.5px;transform-origin:0 0;transform:rotate(0.02deg) scaleX(0.9903);">20</div>
<div id="zl1" class="t " style="left:1019.8px;top:476.0px;font-size:19.5px;transform-origin:0 0;transform:rotate(0.02deg) scaleX(0.9903);">15</div>
<div id="zr1" class="t " style="left:1505.3px;top:476.0px;font-size:19.5px;transform-origin:0 0;transform:rotate(0.02deg) scaleX(0.9903);">15</div>
<div id="zl2" class="t " style="left:1019.8px;top:529.0px;font-size:19.5px;transform-origin:0 0;transform:rotate(0.02deg) scaleX(0.9903);">10</div>
<div id="zr2" class="t " style="left:1505.3px;top:529.0px;font-size:19.5px;transform-origin:0 0;transform:rotate(0.02deg) scaleX(0.9903);">10</div>
<div id="zl3" class="t " style="left:1031.3px;top:583.0px;font-size:19.5px;transform-origin:0 0;transform:rotate(0.02deg) scaleX(0.9202);">5</div>
<div id="zr3" class="t " style="left:1505.3px;top:583.0px;font-size:19.5px;transform-origin:0 0;transform:rotate(0.02deg) scaleX(0.9202);">5</div>
<div id="zl4" class="t " style="left:1031.3px;top:636.0px;font-size:19.5px;transform-origin:0 0;transform:rotate(0.02deg) scaleX(0.9202);">0</div>
<div id="zr4" class="t " style="left:1505.3px;top:636.0px;font-size:19.5px;transform-origin:0 0;transform:rotate(0.02deg) scaleX(0.9202);">0</div>
<div id="l3" class="t " style="left:1603.3px;top:579.0px;font-size:18.5px;transform-origin:0 0;transform:rotate(0.02deg) scaleX(1.0338);">Breakdown</div>
<div id="l4" class="t " style="left:1603.3px;top:611.0px;font-size:18.5px;transform-origin:0 0;transform:rotate(0.02deg) scaleX(1.0147);">Preventive</div>
<div id="th1" class="t b" style="left:911.0px;top:837.0px;font-size:22.5px;transform-origin:0 0;transform:rotate(0.02deg) scaleX(1.0102);">Last 30 Days</div>
<div id="th2" class="t b" style="left:1158.7px;top:837.0px;font-size:22.5px;transform-origin:0 0;transform:rotate(0.02deg) scaleX(1.0355);">Last 31 - 60 Days</div>
<div id="th3" class="t b" style="left:1442.0px;top:837.0px;font-size:22.5px;transform-origin:0 0;transform:rotate(0.02deg) scaleX(1.0349);">Last 61 - 90 Days</div>
<div id="rl1a" class="t b" style="left:674.7px;top:875.0px;font-size:22.5px;transform-origin:0 0;transform:rotate(0.02deg) scaleX(1.0349);">Work</div>
<div id="rl1b" class="t b" style="left:741.0px;top:875.0px;font-size:22.5px;transform-origin:0 0;transform:rotate(0.02deg) scaleX(1.0325);">Requests</div>
<div id="rl20" class="t b" style="left:372.9px;top:918.0px;font-size:22.5px;transform-origin:0 0;transform:rotate(0.02deg) scaleX(1.0935);">Average</div>
<div id="rl21" class="t b" style="left:477.6px;top:918.0px;font-size:22.5px;transform-origin:0 0;transform:rotate(0.02deg) scaleX(1.0185);">Days</div>
<div id="rl22" class="t b" style="left:539.6px;top:918.0px;font-size:22.5px;transform-origin:0 0;transform:rotate(0.02deg) scaleX(1.0605);">To</div>
<div id="rl23" class="t b" style="left:574.2px;top:918.0px;font-size:22.5px;transform-origin:0 0;transform:rotate(0.02deg) scaleX(1.0085);">Complete</div>
<div id="rl24" class="t b" style="left:686.1px;top:918.0px;font-size:22.5px;transform-origin:0 0;transform:rotate(0.02deg) scaleX(1.0420);">Work</div>
<div id="rl25" class="t b" style="left:752.8px;top:918.0px;font-size:22.5px;transform-origin:0 0;transform:rotate(0.02deg) scaleX(1.0452);">Request</div>
<div id="rl3a" class="t b" style="left:704.2px;top:963.0px;font-size:22.5px;transform-origin:0 0;transform:rotate(0.02deg) scaleX(1.0349);">Work</div>
<div id="rl3b" class="t b" style="left:769.7px;top:963.0px;font-size:22.5px;transform-origin:0 0;transform:rotate(0.02deg) scaleX(1.0284);">Orders</div>
<div id="rl4" class="t b" style="left:583.0px;top:1007.0px;font-size:22.5px;transform-origin:0 0;transform:rotate(0.02deg) scaleX(1.0364);">Work Order Completion</div>
<div id="v11" class="t " style="left:973.0px;top:875.0px;font-size:22.5px;transform-origin:0 0;transform:rotate(0.02deg) scaleX(0.9770);">0 (0 Pending)</div>
<div id="v12" class="t " style="left:1258.3px;top:875.0px;font-size:22.5px;transform-origin:0 0;transform:rotate(0.02deg) scaleX(0.9748);">0 (0 Pending)</div>
<div id="v13" class="t " style="left:1542.0px;top:875.0px;font-size:22.5px;transform-origin:0 0;transform:rotate(0.02deg) scaleX(0.9748);">0 (0 Pending)</div>
<div id="v31" class="t " style="left:948.0px;top:963.0px;font-size:22.5px;transform-origin:0 0;transform:rotate(0.02deg) scaleX(0.9803);"><span class="lk">12</span> (<span class="lk">12</span> Pending)</div>
<div id="v32" class="t " style="left:1233.8px;top:963.0px;font-size:22.5px;transform-origin:0 0;transform:rotate(0.02deg) scaleX(0.9961);"><span class="lk">11</span> (<span class="lk">11</span> Pending)</div>
<div id="v33" class="t " style="left:1517.5px;top:963.0px;font-size:22.5px;transform-origin:0 0;transform:rotate(0.02deg) scaleX(0.9753);"><span class="lk">10</span> (<span class="lk">10</span> Pending)</div>
<div id="v41" class="t " style="left:1040.0px;top:1007.0px;font-size:22.5px;transform-origin:0 0;transform:rotate(0.02deg) scaleX(1.0185);">0.00%</div>
<div id="v42" class="t " style="left:1325.0px;top:1007.0px;font-size:22.5px;transform-origin:0 0;transform:rotate(0.02deg) scaleX(1.0185);">0.00%</div>
<div id="v43" class="t " style="left:1609.0px;top:1007.0px;font-size:22.5px;transform-origin:0 0;transform:rotate(0.02deg) scaleX(1.0138);">0.00%</div>
<div id="lu0" class="t " style="left:1107.2px;top:1069.0px;font-size:23.4px;transform-origin:0 0;transform:rotate(0.02deg) scaleX(0.8298);">Last</div>
<div id="lu1" class="t " style="left:1152.8px;top:1069.0px;font-size:23.4px;transform-origin:0 0;transform:rotate(0.02deg) scaleX(0.9332);">Updated:</div>
<div id="lu2" class="t " style="left:1249.9px;top:1069.0px;font-size:23.4px;transform-origin:0 0;transform:rotate(0.02deg) scaleX(0.9625);">01/29/2021</div>
<div id="lu3" class="t " style="left:1372.3px;top:1069.0px;font-size:23.4px;transform-origin:0 0;transform:rotate(0.02deg) scaleX(0.9366);">10:21:50</div>
<div id="lu4" class="t " style="left:1467.3px;top:1069.0px;font-size:23.4px;transform-origin:0 0;transform:rotate(0.02deg) scaleX(0.8062);">AM</div>
<div id="rn" class="t " style="left:1552.5px;top:1067.0px;font-size:23.4px;transform-origin:0 0;transform:rotate(0.02deg) scaleX(0.8964);">Refresh Now</div>
<div id="r1" class="t " style="left:1130.2px;top:746.6px;font-size:21px;transform-origin:0 0;transform:rotate(-90deg) scaleX(0.8019) translateY(-18px);">Last 30 Days</div>
<div id="r2" class="t " style="left:1280.7px;top:783.7px;font-size:21px;transform-origin:0 0;transform:rotate(-90deg) scaleX(0.8226) translateY(-18px);">Last 31 - 60 Days</div>
<div id="r3" class="t " style="left:1431.2px;top:783.7px;font-size:21px;transform-origin:0 0;transform:rotate(-90deg) scaleX(0.8226) translateY(-18px);">Last 61 - 90 Days</div>
<!-- scrollbars -->
<div class="a" style="left:1726px;top:206px;width:30px;height:805px;background:#f0f0f0"></div>
<div class="a" style="left:1727px;top:265px;width:26px;height:394px;background:#cdcdcd"></div>
<div class="a" style="left:280px;top:1011px;width:1476px;height:31px;background:#f0f0f0"></div>
<div class="a" style="left:339px;top:1013px;width:1319px;height:26px;background:#cdcdcd"></div>
<svg class="a" style="left:0;top:0" width="1777" height="1123" viewBox="0 0 1777 1123"><g fill="none" stroke="#5e5e5e" stroke-width="3.800">
<path d="M1731 248.800L1740 238.800L1749 248.800"/>
<path d="M1731 967.200L1740 977.200L1749 967.200"/>
<path d="M322.500 1017.500L312.300 1026.300L322.500 1035"/>
<path d="M1682 1017.500L1692.200 1026.300L1682 1035"/>
</g></svg>

</body></html>
